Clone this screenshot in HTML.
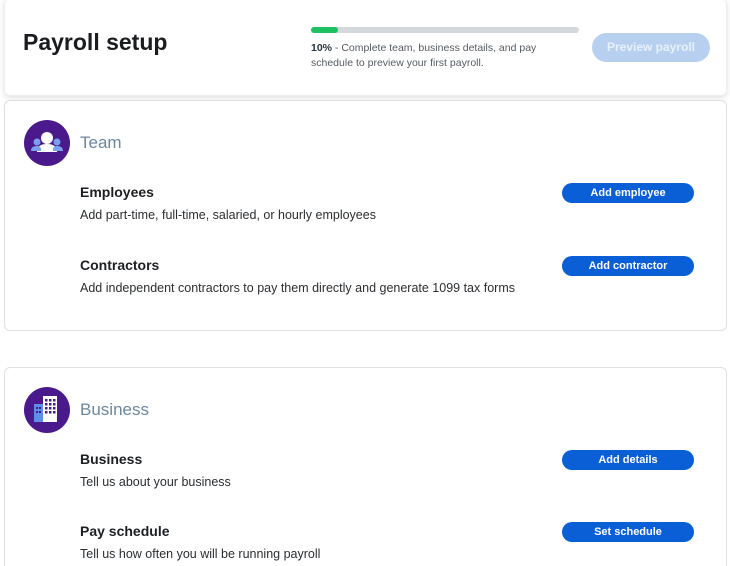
<!DOCTYPE html>
<html><head><style>
html,body{margin:0;padding:0;overflow:hidden;height:566px}
#w{position:relative;width:730px;height:566px;overflow:hidden;background:#fff;font-family:"Liberation Sans",sans-serif}
.card{position:absolute;left:4px;right:3px;background:#fff;border:1px solid #dde1e4;border-radius:6px}
.abs{position:absolute}
.btn{position:absolute;left:562px;width:132px;height:20px;border-radius:10px;background:#0b5fd6;color:#fff;font-size:11px;font-weight:bold;text-align:center;line-height:20px}
.t{position:absolute;left:80px;font-size:14px;font-weight:bold;color:#1d1f22}
.s{position:absolute;left:80px;font-size:12.5px;color:#2b2e31}
.circ{position:absolute;left:24px;width:46px;height:46px;border-radius:50%;background:#4a1a8c}
.h{position:absolute;left:80px;font-size:17px;color:#6b87a0}
</style></head><body><div id="w">
<div class="card" style="top:-2px;height:96px;box-shadow:0 2px 6px rgba(0,0,0,.12);border-color:#eee">
 <div class="abs" style="left:18px;top:30px;font-size:23px;font-weight:bold;color:#1a1c1f">Payroll setup</div>
 <div class="abs" style="left:306px;top:28px;width:268px;height:6px;border-radius:3px;background:#d4d9dd"><div style="width:27px;height:6px;border-radius:3px;background:#1ec05f"></div></div>
 <div class="abs" style="left:306px;top:42px;width:250px;font-size:10.5px;line-height:15px;color:#555b61"><b style="color:#2a3340">10%</b> - Complete team, business details, and pay schedule to preview your first payroll.</div>
 <div class="abs" style="left:587px;top:34px;width:118px;height:29px;border-radius:15px;background:#b7d0f0;color:#e8f0fb;font-size:12px;font-weight:bold;text-align:center;line-height:29px">Preview payroll</div>
</div>
<div class="card" style="top:100px;height:229px"></div>
<div class="circ" style="top:120px"><svg width="46" height="46"><circle cx="23" cy="18" r="6" fill="#fff"/><path d="M13 32c0-6 4-8 10-8s10 2 10 8z" fill="#fff"/><circle cx="13" cy="22" r="3.5" fill="#7aa0ee"/><circle cx="33" cy="22" r="3.5" fill="#7aa0ee"/><path d="M7 31c0-4 3-5 6-5 2 0 3 1 4 2v3zM39 31c0-4-3-5-6-5-2 0-3 1-4 2v3z" fill="#7aa0ee"/></svg></div>
<div class="h" style="top:133px">Team</div>
<div class="t" style="top:184px">Employees</div>
<div class="s" style="top:208px">Add part-time, full-time, salaried, or hourly employees</div>
<div class="btn" style="top:183px">Add employee</div>
<div class="t" style="top:257px">Contractors</div>
<div class="s" style="top:281px">Add independent contractors to pay them directly and generate 1099 tax forms</div>
<div class="btn" style="top:256px">Add contractor</div>
<div class="card" style="top:367px;height:220px"></div>
<div class="circ" style="top:387px"><svg width="46" height="46"><rect x="10" y="17" width="9" height="18" fill="#5b8fe8"/><rect x="19" y="9" width="14" height="26" fill="#fff"/><g fill="#4a1a8c"><rect x="21" y="12" width="2.5" height="2.5"/><rect x="25" y="12" width="2.5" height="2.5"/><rect x="29" y="12" width="2.5" height="2.5"/><rect x="21" y="16" width="2.5" height="2.5"/><rect x="25" y="16" width="2.5" height="2.5"/><rect x="29" y="16" width="2.5" height="2.5"/><rect x="21" y="20" width="2.5" height="2.5"/><rect x="25" y="20" width="2.5" height="2.5"/><rect x="29" y="20" width="2.5" height="2.5"/><rect x="21" y="24" width="2.5" height="2.5"/><rect x="25" y="24" width="2.5" height="2.5"/><rect x="29" y="24" width="2.5" height="2.5"/><rect x="12" y="20" width="2" height="2"/><rect x="15" y="20" width="2" height="2"/><rect x="12" y="24" width="2" height="2"/><rect x="15" y="24" width="2" height="2"/></g></svg></div>
<div class="h" style="top:400px">Business</div>
<div class="t" style="top:451px">Business</div>
<div class="s" style="top:475px">Tell us about your business</div>
<div class="btn" style="top:450px">Add details</div>
<div class="t" style="top:523px">Pay schedule</div>
<div class="s" style="top:547px">Tell us how often you will be running payroll</div>
<div class="btn" style="top:522px">Set schedule</div>
</div></body></html>
